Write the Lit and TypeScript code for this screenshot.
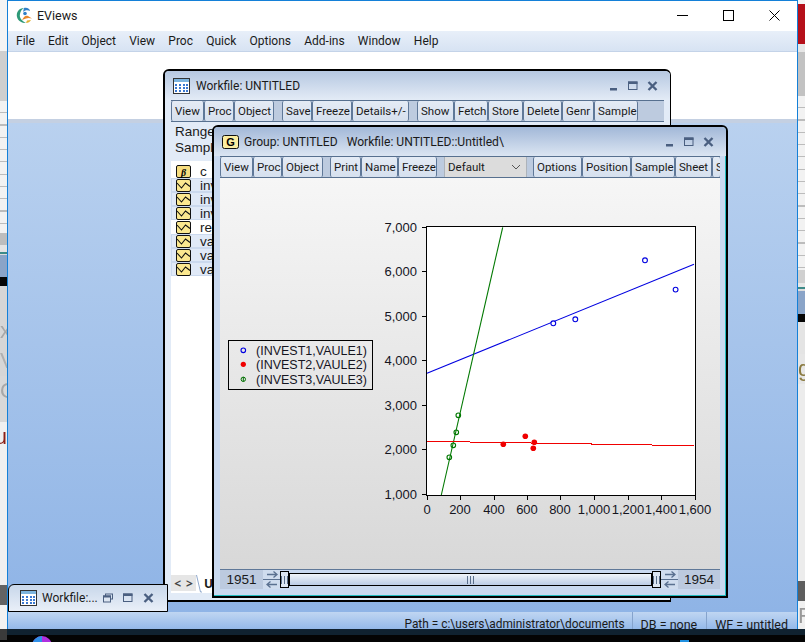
import { LitElement, html, css, svg } from "lit"
import { customElement } from "lit/decorators.js"

type Seg = { h: number; bg?: string; cls?: string; text?: string; color?: string }
type Tool = { label?: string; w: number; sep?: boolean; combo?: boolean; fill?: boolean }

const leftStrip: Seg[] = [
  { h: 51, bg: "#f4f4f4" },
  { h: 50, bg: "#cfcfcf" },
  { h: 132, cls: "lines" },
  { h: 12, bg: "#bdbdbd" },
  { h: 7, bg: "#e4e4e4" },
  { h: 2, bg: "#3d8a88" },
  { h: 1, bg: "#ddd" },
  { h: 22, bg: "#8aa4c8" },
  { h: 9, bg: "#060606" },
  { h: 30, bg: "#d6d6d6" },
  { h: 30, bg: "#d6d6d6", text: "x", color: "#a8a8a8" },
  { h: 30, bg: "#d6d6d6", text: "V", color: "#b0b0b0" },
  { h: 46, bg: "#d8d8d8", text: "O", color: "#a8a8a8" },
  { h: 30, bg: "#f0f0f0", cls: "end", text: "au", color: "#8a2018" },
  { h: 133, bg: "#f0f0f0" },
  { h: 20, bg: "#636363" },
  { h: 24, bg: "#f2f2f2" },
]

const rightStrip: Seg[] = [
  { h: 4, bg: "#f4f4f4" },
  { h: 40, bg: "#b5101a" },
  { h: 8, bg: "#e6e6e6" },
  { h: 44, bg: "#c2c2c2" },
  { h: 174, cls: "lines" },
  { h: 13, bg: "#d0d0d0" },
  { h: 4, bg: "#e8e8e8" },
  { h: 2, bg: "#3d8a88" },
  { h: 2, bg: "#ddd" },
  { h: 23, bg: "#8aa4c8" },
  { h: 8, bg: "#060606" },
  { h: 32, bg: "#e4e4e4" },
  { h: 30, bg: "#e6e6e6", text: "g", color: "#8a7a40" },
  { h: 197, bg: "#ececec" },
  { h: 20, bg: "#5e5e5e" },
  { h: 23, bg: "#f0f0f0", text: "R", color: "#999" },
]

const workfileTools: Tool[] = [
  { label: "View", w: 33 },
  { label: "Proc", w: 30 },
  { label: "Object", w: 40 },
  { sep: true, w: 8 },
  { label: "Save", w: 30 },
  { label: "Freeze", w: 40 },
  { label: "Details+/-", w: 57 },
  { sep: true, w: 8 },
  { label: "Show", w: 37 },
  { label: "Fetch", w: 34 },
  { label: "Store", w: 35 },
  { label: "Delete", w: 39 },
  { label: "Genr", w: 32 },
  { label: "Sample", w: 44 },
  { fill: true, w: 27 },
]

const groupTools: Tool[] = [
  { label: "View", w: 33 },
  { label: "Proc", w: 29 },
  { label: "Object", w: 41 },
  { sep: true, w: 7 },
  { label: "Print", w: 31 },
  { label: "Name", w: 37 },
  { label: "Freeze", w: 39 },
  { sep: true, w: 7 },
  { combo: true, w: 83 },
  { sep: true, w: 6 },
  { label: "Options", w: 49 },
  { label: "Position", w: 49 },
  { label: "Sample", w: 44 },
  { label: "Sheet", w: 37 },
  { label: "Stats", w: 9 },
]

const series = ["c", "invest1", "invest2", "invest3", "resid", "vaule1", "vaule2", "vaule3"]
const yTicks = [
  ["7,000", 227], ["6,000", 271], ["5,000", 316], ["4,000", 360],
  ["3,000", 405], ["2,000", 449], ["1,000", 494],
] as const
const xTicks = [
  ["0", 427], ["200", 460], ["400", 494], ["600", 527], ["800", 560],
  ["1,000", 594], ["1,200", 628], ["1,400", 661], ["1,600", 695],
] as const
const bluePts = [[553.3, 323.3], [575.3, 319.3], [645, 260.3], [675.6, 289.6]]
const redPts = [[503.3, 444.3], [525.3, 436.3], [534.3, 442.3], [533.3, 448.3]]
const greenPts = [[449.3, 457.3], [453.3, 445.3], [456.3, 432.3], [458.3, 415.3]]

const tableIcon = html`<svg class="ico" width="17" height="16" viewBox="0 0 17 16">
  <rect x=".5" y=".5" width="16" height="15" fill="#fff" stroke="#333"/>
  <rect x="1" y="1" width="15" height="3" fill="#7cb4de"/>
  <g fill="#3a78d0">
    ${[6, 9, 12].map((y) => [3, 7, 11, 14].map((x) => svg`<rect x=${x - 1} y=${y} width="2" height="2"/>`))}
  </g>
</svg>`

const graphIcon = html`<svg class="ico" width="15" height="13" viewBox="0 0 15 13">
  <rect x=".5" y=".5" width="14" height="12" rx="1.5" fill="#fbe88f" stroke="#111"/>
  <path d="M1 4 L5.500 9 L9.500 4 L14 7.500" fill="none" stroke="#111" stroke-width="1.100"/>
</svg>`

const betaIcon = html`<svg class="ico" width="15" height="13" viewBox="0 0 15 13">
  <rect x=".5" y=".5" width="14" height="12" rx="1.5" fill="#f6dd80" stroke="#111"/>
  <text x="7.500" y="10.500" text-anchor="middle" class="beta">β</text>
</svg>`

const logo = html`<svg class="logo" width="17" height="17" viewBox="0 0 17 17">
  <path d="M8 1 C3 1 0 5 1 10 C2 14 6 16 10 16 C6 14 3 11 4 7 C4.500 4 6 2 8 1Z" fill="#2e9a78"/>
  <path d="M8 1 C11 0 14 2 14 4 C12 3 9 3 7 5Z" fill="#2f7fc8"/>
  <circle cx="9" cy="6.500" r="1.800" fill="#2f7fc8"/>
  <path d="M6 13 C8 9 10 8 12 9 L16 11.500 L12.500 11 L10 11.500Z" fill="#e8872a"/>
  <path d="M10 16 C12 16 14 15 15 13 L11 13.500Z" fill="#e0b030"/>
</svg>`

const ctlMin = html`<svg width="10" height="10" viewBox="0 0 10 10"><rect x="1" y="7" width="7" height="2.500" fill="#4a5f80"/></svg>`
const ctlMax = html`<svg width="10" height="10" viewBox="0 0 10 10"><rect x=".5" y="1" width="8.500" height="7.500" fill="none" stroke="#4a5f80"/><rect x="0" y=".5" width="9.500" height="2.500" fill="#4a5f80"/></svg>`
const ctlRestore = html`<svg width="10" height="10" viewBox="0 0 10 10"><rect x="2.500" y="1" width="7" height="5" fill="none" stroke="#4a5f80"/><rect x=".5" y="3" width="7" height="6" fill="#dce5f1" stroke="#4a5f80"/><rect x="0" y="2.500" width="8" height="2" fill="#4a5f80"/></svg>`
const ctlClose = html`<svg width="11" height="10" viewBox="0 0 11 10"><path d="M1.500 1 L9.500 9 M9.500 1 L1.500 9" stroke="#4a5f80" stroke-width="2.400"/></svg>`

const arrowBox = html`<svg width="17" height="19" viewBox="0 0 17 19">
  <path d="M4 4.500 H14 M10.500 1.500 L14 4.500 L10.500 7.500" fill="none" stroke="#5a7090" stroke-width="1.300"/>
  <path d="M0 9.500 H17" stroke="#5a7090"/>
  <path d="M4 14.500 H14 M7.500 11.500 L4 14.500 L7.500 17.500" fill="none" stroke="#5a7090" stroke-width="1.300"/>
</svg>`

const grip = html`<svg width="7" height="8" viewBox="0 0 7 8"><path d="M.5 0V8M3.500 0V8M6.500 0V8" stroke="#5a6f8c"/></svg>`

@customElement("app-root")
export class AppRoot extends LitElement {
  static styles = css`
    :host {
      display: block;
      width: 805px;
      height: 642px;
      overflow: hidden;
      font-family: Roboto, "Noto Sans", sans-serif;
      color: #1a1a1a;
    }

    .screen {
      position: relative;
      width: 805px;
      height: 642px;
      display: grid;
      grid-template-columns: 7px 791px 7px;
      grid-template-rows: 629px 13px;
      overflow: hidden;
      background: #eee;
    }

    .strip {
      display: flex;
      flex-direction: column;
      overflow: hidden;
      filter: blur(0.4px);
    }

    .seg {
      font: 22px "Liberation Sans", sans-serif;
      line-height: 30px;
      white-space: nowrap;
      overflow: hidden;
      flex: none;
      display: flex;
    }

    .seg.end {
      justify-content: flex-end;
    }

    .seg.lines {
      background: repeating-linear-gradient(#f2f2f2 0 11px, #bcbcbc 11px 12.3px);
    }

    .main {
      display: flex;
      flex-direction: column;
      border: 1px solid #1480d8;
      border-bottom: none;
      background: #fff;
      min-height: 0;
    }

    .titlebar {
      height: 30px;
      flex: none;
      display: flex;
      align-items: center;
      font-size: 12.500px;
      padding: 0 0 1px 8px;
      box-sizing: border-box;
      gap: 4px;
    }

    .logo {
      flex: none;
    }

    .sysbtns {
      margin-left: auto;
      display: flex;
      align-items: center;
    }

    .sysbtns span {
      width: 46px;
      display: flex;
      justify-content: center;
    }

    .menubar {
      height: 21px;
      flex: none;
      display: flex;
      align-items: center;
      gap: 13.200px;
      padding-left: 8px;
      font-size: 12px;
      background: linear-gradient(#e8eff9, #d7e3f3);
      border-bottom: 1px solid #c4d3e8;
      box-sizing: border-box;
    }

    .cmd {
      height: 67px;
      flex: none;
      border-bottom: 4px solid #c4d0e2;
    }

    .mdi {
      flex: 1;
      min-height: 0;
      background: linear-gradient(#b9d1ef, #8fb4e6);
    }

    .status {
      height: 17px;
      flex: none;
      display: flex;
      justify-content: flex-end;
      font-size: 12.500px;
      line-height: 25px;
      background: linear-gradient(#c0d6f2, #94b9e9);
      overflow: hidden;
    }

    .status span {
      padding: 0 9px 0 8px;
      border-left: 1px solid #85a3cc;
      white-space: nowrap;
    }

    .status span.path {
      border-left: none;
      font-size: 11.900px;
      padding-right: 7px;
    }

    .taskbar {
      grid-column: 1 / 4;
      position: relative;
      background: linear-gradient(#102230 0 6px, #040404 6px);
      overflow: hidden;
    }

    .taskedge {
      width: 7px;
      height: 11px;
      background: #3a3a3a;
    }

    .taskicon {
      position: absolute;
      left: 32px;
      top: 7px;
    }

    .taskmark {
      position: absolute;
      left: 680px;
      top: 11px;
      width: 9px;
      height: 2px;
      background: #2090e0;
    }

    .win {
      position: absolute;
      box-sizing: border-box;
      display: flex;
      flex-direction: column;
      border: 2px solid #000;
      border-radius: 6px 6px 0 0;
      overflow: hidden;
    }

    .win.workfile {
      left: 163px;
      top: 69px;
      width: 508px;
      height: 533px;
      background: #e2ebf7;
      border-right-width: 1.500px;
    }

    .win.group {
      left: 212px;
      top: 125px;
      width: 516px;
      height: 473px;
      background: #c9d9f0;
      box-shadow: inset -1px -1px 0 #22bcc0;
    }

    .wintitle {
      height: 29px;
      flex: none;
      display: flex;
      align-items: center;
      gap: 5px;
      padding: 0 8px;
      font-size: 12px;
      white-space: pre;
    }

    .workfile > .wintitle {
      background: linear-gradient(#b6c8e1, #e3ebf6);
      gap: 6px;
    }

    .group > .wintitle {
      background: linear-gradient(#a2b8d8, #dbe5f2);
      font-size: 12.100px;
    }

    .ctls {
      margin-left: auto;
      display: flex;
      align-items: center;
      gap: 9px;
      padding-right: 4px;
    }

    .body {
      flex: 1;
      min-height: 0;
      display: flex;
      flex-direction: column;
      margin: 0 6px;
      padding-bottom: 7px;
      overflow: hidden;
    }

    .toolbar {
      height: 22px;
      flex: none;
      display: flex;
      box-sizing: border-box;
      border-top: 1px solid #57708f;
      border-bottom: 1px solid #57708f;
      background: #bdcbdf;
      font-size: 11.500px;
      overflow: hidden;
    }

    .tool {
      flex: none;
      box-sizing: border-box;
      border: 1px solid #5f7898;
      border-width: 0 1px;
      border-radius: 2px;
      background: linear-gradient(#e4ebf5, #d6e0ee);
      padding-left: 3px;
      line-height: 21px;
      white-space: nowrap;
      overflow: hidden;
    }

    .combo {
      flex: none;
      box-sizing: border-box;
      display: flex;
      align-items: center;
      justify-content: space-between;
      padding: 0 5px 0 3px;
      background: #dcdcdc;
      border: 1px solid #adb3ba;
      border-width: 0 1.500px;
    }

    .info {
      flex: none;
      padding: 2px 0 0 4px;
      font: 13.500px/16px "Liberation Sans", sans-serif;
      height: 39px;
      box-sizing: border-box;
      white-space: nowrap;
    }

    .list {
      flex: 1;
      min-height: 0;
      background: #fff;
      padding-top: 3px;
    }

    .row {
      height: 14px;
      display: flex;
      align-items: center;
      gap: 9px;
      box-sizing: border-box;
      padding-left: 5px;
      font: 13.500px "Liberation Sans", sans-serif;
    }

    .row.hit {
      background: #e0e9f7;
      box-shadow: inset 0 0 0 1px #cbd9ee;
    }

    .ico {
      flex: none;
    }

    .beta {
      font: italic bold 10px "Liberation Serif", serif;
    }

    .tabs {
      height: 18px;
      flex: none;
      display: flex;
      background: #fff;
    }

    .nav {
      width: 25px;
      height: 16px;
      flex: none;
      background: #e6e6e6;
      display: flex;
      justify-content: center;
      align-items: center;
      gap: 5px;
      font: bold 12px "Noto Sans", sans-serif;
      color: #444;
    }

    .tabedge {
      flex: none;
    }

    .tab {
      font: bold 12px/18px "Noto Sans", sans-serif;
      padding-left: 2px;
    }

    .chart {
      flex: 1;
      min-height: 0;
      display: block;
      background: linear-gradient(#f6f6f6, #d8d8d8);
    }

    .chart text {
      font: 13px "Liberation Sans", sans-serif;
      fill: #15151f;
    }

    .chart text.key {
      font-size: 12.500px;
    }

    .slider {
      height: 19px;
      flex: none;
      display: flex;
      align-items: stretch;
      border-top: 1px solid #5f7898;
      background: #c9d9f0;
    }

    .year {
      width: 43px;
      flex: none;
      text-align: center;
      font: 13.500px/19px "Liberation Sans", sans-serif;
      background: #bccadf;
    }

    .year.end {
      width: 42px;
    }

    .arrows {
      flex: none;
      width: 17px;
      background: #cfdcee;
      line-height: 0;
    }

    .track {
      flex: 1;
      margin: 3px 0;
      box-sizing: border-box;
      border: 1px solid #000;
      background: linear-gradient(#f0f4fa, #bccde6);
      display: flex;
      align-items: center;
      justify-content: center;
    }

    .thumb {
      flex: none;
      width: 9px;
      margin-top: 1px;
      height: 17px;
      box-sizing: border-box;
      border: 1px solid #000;
      background: #dbe5f2;
      display: flex;
      align-items: center;
      justify-content: center;
    }

    .min {
      position: absolute;
      left: 8px;
      top: 584px;
      width: 160px;
      height: 28px;
      box-sizing: border-box;
      display: flex;
      align-items: center;
      gap: 5px;
      padding: 0 12px 0 11px;
      border: 1px solid #000;
      border-width: 1.500px 1.500px 1.500px 1px;
      border-radius: 6px 0 0 0;
      background: linear-gradient(#c8d7ea, #e9eff8);
      font-size: 12px;
    }

    .min .ctls {
      gap: 10px;
      padding-right: 2px;
    }
  `

  private strip(segs: Seg[]) {
    return html`<div class="strip">
      ${segs.map(
        (s) => html`<div
          class="seg ${s.cls ?? ""}"
          style="height:${s.h}px;${s.bg ? `background:${s.bg};` : ""}${s.color ? `color:${s.color};` : ""}"
        >${s.text ?? ""}</div>`
      )}
    </div>`
  }

  private toolbar(tools: Tool[]) {
    return html`<div class="toolbar">
      ${tools.map((t) => {
        if (t.sep || t.fill) return html`<div style="width:${t.w}px;flex:none"></div>`
        if (t.combo)
          return html`<div class="combo" style="width:${t.w}px">
            <span>Default</span>
            <svg width="10" height="6" viewBox="0 0 10 6"><path d="M1 1 L5 5 L9 1" fill="none" stroke="#555"/></svg>
          </div>`
        return html`<div class="tool" style="width:${t.w}px">${t.label}</div>`
      })}
    </div>`
  }

  private chart() {
    return html`<svg class="chart" width="500" height="391" viewBox="220 178 500 391">
      <rect x="228.500" y="340.500" width="144" height="49" fill="none" stroke="#000"/>
      <circle cx="243.300" cy="350.300" r="2.300" fill="none" stroke="#0000e0" stroke-width="1.100"/>
      <circle cx="243.300" cy="364.300" r="2.600" fill="#f00000"/>
      <circle cx="243.300" cy="379.300" r="2.200" fill="none" stroke="#007000"/>
      <path d="M243.300 377V381.500" stroke="#007000"/>
      <text class="key" x="256" y="355">(INVEST1,VAULE1)</text>
      <text class="key" x="256" y="369">(INVEST2,VAULE2)</text>
      <text class="key" x="256" y="384">(INVEST3,VAULE3)</text>

      <rect x="426.500" y="226.500" width="269" height="269" fill="#fff" stroke="#000"/>
      ${yTicks.map(
        ([label, y]) => svg`
          <path d="M422 ${y + 0.5}H427" stroke="#000"/>
          <text x="417" y=${y + 5} text-anchor="end">${label}</text>`
      )}
      ${xTicks.map(
        ([label, x]) => svg`
          <path d="M${x + 0.5} 495V500" stroke="#000"/>
          <text x=${x} y="514" text-anchor="middle">${label}</text>`
      )}
      <g stroke-width="1.100" fill="none">
        <path d="M427 373.300L694 264.300" stroke="#0000e0"/>
        <path d="M441.300 495L502.700 227.300" stroke="#007800"/>
        <path d="M427 441.300L694 445.700" stroke="#f00000" stroke-width="1" shape-rendering="crispEdges"/>
      </g>
      <g fill="#fff" stroke="#0000e0" stroke-width="1.100">
        ${bluePts.map(([x, y]) => svg`<circle cx=${x} cy=${y} r="2.400"/>`)}
      </g>
      <g fill="#f00000">
        ${redPts.map(([x, y]) => svg`<circle cx=${x} cy=${y} r="2.800"/>`)}
      </g>
      <g fill="none" stroke="#007800" stroke-width="1.100">
        ${greenPts.map(([x, y]) => svg`<circle cx=${x} cy=${y} r="2.300"/>`)}
      </g>
    </svg>`
  }

  render() {
    return html`<div class="screen">
      ${this.strip(leftStrip)}
      <div class="main">
        <div class="titlebar">
          ${logo}<span>EViews</span>
          <div class="sysbtns">
            <span><svg width="11" height="11" viewBox="0 0 11 11"><path d="M0 5.500H11" stroke="#000"/></svg></span>
            <span><svg width="11" height="11" viewBox="0 0 11 11"><rect x=".5" y=".5" width="10" height="10" fill="none" stroke="#000"/></svg></span>
            <span><svg width="11" height="11" viewBox="0 0 11 11"><path d="M.5 .5L10.500 10.500M10.500 .5L.5 10.500" stroke="#000"/></svg></span>
          </div>
        </div>
        <div class="menubar">
          ${["File", "Edit", "Object", "View", "Proc", "Quick", "Options", "Add-ins", "Window", "Help"].map(
            (m) => html`<span>${m}</span>`
          )}
        </div>
        <div class="cmd"></div>
        <div class="mdi"></div>
        <div class="status">
          <span class="path">Path = c:\\users\\administrator\\documents</span>
          <span>DB = none</span>
          <span>WF = untitled</span>
        </div>
      </div>
      ${this.strip(rightStrip)}
      <div class="taskbar">
        <div class="taskedge"></div>
        <svg class="taskicon" width="20" height="20" viewBox="0 0 20 20">
          <circle cx="10" cy="10" r="10" fill="#b030e0"/>
          <path d="M10 0A10 10 0 0 0 0 10H10Z" fill="#3090e8"/>
        </svg>
        <div class="taskmark"></div>
      </div>

      <div class="win workfile">
        <div class="wintitle">
          ${tableIcon}<span>Workfile: UNTITLED</span>
          <div class="ctls">${ctlMin}${ctlMax}${ctlClose}</div>
        </div>
        <div class="body">
          ${this.toolbar(workfileTools)}
          <div class="info">Range:  1951 1954<br />Sample: 1951 1954</div>
          <div class="list">
            ${series.map(
              (s, i) => html`<div class="row ${i > 0 && i !== 4 ? "hit" : ""}">
                ${i === 0 ? betaIcon : graphIcon}<span>${s}</span>
              </div>`
            )}
          </div>
          <div class="tabs">
            <div class="nav"><span>&lt;</span><span>&gt;</span></div>
            <svg class="tabedge" width="6" height="18" viewBox="0 0 6 18"><path d="M.5 0L4.500 17H6" fill="#fff" stroke="#8fa8cc"/></svg>
            <div class="tab">Untitled</div>
          </div>
        </div>
      </div>

      <div class="win group">
        <div class="wintitle">
          <svg class="ico" width="17" height="14" viewBox="0 0 17 14">
            <rect x=".5" y=".5" width="16" height="13" rx="2" fill="#fbeda0" stroke="#111"/>
            <text x="8.500" y="11" text-anchor="middle" style="font:bold 11px 'Liberation Sans',sans-serif">G</text>
          </svg>
          <span>Group: UNTITLED   Workfile: UNTITLED::Untitled\\</span>
          <div class="ctls">${ctlMin}${ctlMax}${ctlClose}</div>
        </div>
        <div class="body">
          ${this.toolbar(groupTools)}
          ${this.chart()}
          <div class="slider">
            <div class="year">1951</div>
            <div class="arrows">${arrowBox}</div>
            <div class="thumb">${grip}</div>
            <div class="track">${grip}</div>
            <div class="thumb">${grip}</div>
            <div class="arrows">${arrowBox}</div>
            <div class="year end">1954</div>
          </div>
        </div>
      </div>

      <div class="min">
        ${tableIcon}<span>Workfile:...</span>
        <div class="ctls">${ctlRestore}${ctlMax}${ctlClose}</div>
      </div>
    </div>`
  }
}
